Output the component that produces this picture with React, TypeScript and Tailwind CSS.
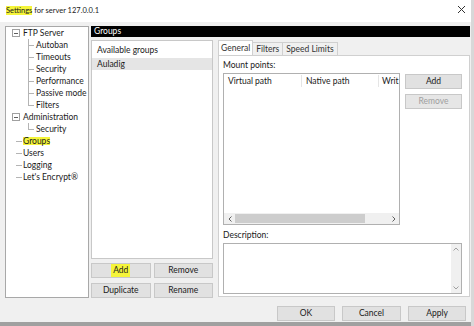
import React from "react";

const FONT = { fontFamily: 'Lato, "Noto Sans", "Liberation Sans", sans-serif' };

function TreeItem({ depth, label, last, expander, highlight }: { depth: number; label: string; last?: boolean; expander?: boolean; highlight?: boolean }) {
  return (
    <div className="relative h-3 flex items-center whitespace-nowrap" style={{ paddingLeft: depth === 0 ? 17 : 30 }}>
      {depth === 0 && (
        <>
          {expander ? (
            <span className="absolute left-[6px] top-[2px] w-[8px] h-[8px] border border-[#a0a0a0] bg-white flex items-center justify-center">
              <span className="w-[4px] h-px bg-[#606060]" />
            </span>
          ) : (
            <span className="absolute left-[10px] top-[6px] w-[6px] border-t border-[#b4b4b4]" />
          )}
        </>
      )}
      {depth === 1 && (
        <>
          <span className={`absolute left-[22px] top-0 border-l border-[#b4b4b4] ${last ? "h-[6px]" : "h-3"}`} />
          <span className="absolute left-[22px] top-[6px] w-[6px] border-t border-[#b4b4b4]" />
        </>
      )}
      <span className={`leading-none ${highlight ? "bg-[#f5f53a]" : ""}`}>{label}</span>
    </div>
  );
}

function Btn({ children, className = "", disabled, hl }: { children: React.ReactNode; className?: string; disabled?: boolean; hl?: boolean }) {
  return (
    <div className={`h-[15px] flex items-center justify-center border border-[#c8c8c8] ${disabled ? "text-[#a0a0a0] bg-[#e6e6e6]" : "bg-[#e1e1e1]"} ${className}`}>
      <span className={hl ? "bg-[#f5f53a] px-[2px]" : ""}>{children}</span>
    </div>
  );
}

export default function App() {
  return (
    <div className="w-[474px] h-[326px] bg-[#f0f0f0] text-[8.5px] text-[#1a1a1a] relative overflow-hidden" style={FONT}>
      {/* title bar */}
      <div className="h-[22px] bg-white flex items-center justify-between pl-[6px] pr-[8px]">
        <div className="text-[7.5px]">
          <span className="bg-[#f5f53a]">Settings</span> for server 127.0.0.1
        </div>
        <svg width="9" height="9" viewBox="0 0 9 9" className="mb-[3px]">
          <path d="M1 1L8 8M8 1L1 8" stroke="#333" strokeWidth="1" />
        </svg>
      </div>

      <div className="flex gap-[2px] pl-[5px] pr-[4px] pt-[4px]">
        {/* tree */}
        <div className="w-[84px] h-[272px] bg-white border border-[#a8a8a8]">
          <TreeItem depth={0} label="FTP Server" expander />
          <TreeItem depth={1} label="Autoban" />
          <TreeItem depth={1} label="Timeouts" />
          <TreeItem depth={1} label="Security" />
          <TreeItem depth={1} label="Performance" />
          <TreeItem depth={1} label="Passive mode" />
          <TreeItem depth={1} label="Filters" last />
          <TreeItem depth={0} label="Administration" expander />
          <TreeItem depth={1} label="Security" last />
          <TreeItem depth={0} label="Groups" highlight />
          <TreeItem depth={0} label="Users" />
          <TreeItem depth={0} label="Logging" />
          <TreeItem depth={0} label="Let's Encrypt®" />
        </div>

        {/* right area */}
        <div className="flex-1 flex flex-col">
          <div className="h-[11px] bg-black text-white flex items-center pl-[3px] leading-none">Groups</div>
          <div className="flex gap-[5px] mt-[3px]">
            {/* group list */}
            <div className="w-[122px] flex flex-col">
              <div className="h-[219px] bg-white border border-[#c8c8c8] pt-[3px]">
                <div className="h-[12px] flex items-center pl-[5px]">Available groups</div>
                <div className="h-[12px] flex items-center pl-[5px] bg-[#e5e5e5] mt-[2px]">Auladig</div>
              </div>
              <div className="grid grid-cols-2 gap-x-[3px] gap-y-[5px] mt-[4px]">
                <Btn hl>Add</Btn>
                <Btn>Remove</Btn>
                <Btn>Duplicate</Btn>
                <Btn>Rename</Btn>
              </div>
            </div>

            {/* tabs */}
            <div className="flex-1 flex flex-col">
              <div className="flex h-[15px] items-end text-[#333]">
                <div className="h-[15px] px-[2px] bg-white border border-b-0 border-[#d0d0d0] flex items-center">General</div>
                <div className="h-[13px] px-[3px] border-t border-r border-[#d0d0d0] flex items-center">Filters</div>
                <div className="h-[13px] px-[3px] border-t border-r border-[#d0d0d0] flex items-center">Speed Limits</div>
              </div>
              <div className="h-[242px] bg-white border border-[#d0d0d0] px-[4px] pt-[3px]">
                <div className="h-[12px] flex items-center">Mount points:</div>
                <div className="flex gap-[5px] mt-[2px]">
                  <div className="w-[177px] h-[152px] border border-[#b0b0b0] flex flex-col">
                    <div className="flex h-[14px] items-center">
                      <div className="w-[78px] pl-[4px] border-r border-[#e5e5e5]">Virtual path</div>
                      <div className="w-[77px] pl-[4px] border-r border-[#e5e5e5]">Native path</div>
                      <div className="flex-1 pl-[3px] overflow-hidden whitespace-nowrap">Writ</div>
                    </div>
                    <div className="flex-1" />
                    <div className="h-[11px] bg-[#f0f0f0] flex items-center">
                      <div className="w-[11px] flex items-center justify-center">
                        <svg width="4" height="6" viewBox="0 0 4 6"><path d="M3.5 0.5L1 3L3.5 5.5" stroke="#606060" fill="none" /></svg>
                      </div>
                      <div className="w-[130px] h-[9px] bg-[#cdcdcd]" />
                      <div className="flex-1" />
                      <div className="w-[11px] flex items-center justify-center">
                        <svg width="4" height="6" viewBox="0 0 4 6"><path d="M0.5 0.5L3 3L0.5 5.5" stroke="#606060" fill="none" /></svg>
                      </div>
                    </div>
                  </div>
                  <div className="w-[57px] flex flex-col gap-[5px] pt-[1px]">
                    <Btn>Add</Btn>
                    <Btn disabled>Remove</Btn>
                  </div>
                </div>
                <div className="h-[12px] flex items-center mt-[4px]">Description:</div>
                <div className="w-[239px] h-[51px] border border-[#b0b0b0] mt-[2px] flex justify-end">
                  <div className="w-[10px] bg-[#f0f0f0] flex flex-col items-center justify-between py-[3px]">
                    <svg width="6" height="4" viewBox="0 0 6 4"><path d="M0.5 3.5L3 1L5.5 3.5" stroke="#a0a0a0" fill="none" /></svg>
                    <svg width="6" height="4" viewBox="0 0 6 4"><path d="M0.5 0.5L3 3L5.5 0.5" stroke="#a0a0a0" fill="none" /></svg>
                  </div>
                </div>
              </div>
            </div>
          </div>
        </div>
      </div>

      {/* dialog buttons */}
      <div className="flex justify-end gap-[7px] pr-[8px] mt-[8px]">
        <Btn className="w-[58px]">OK</Btn>
        <Btn className="w-[59px]">Cancel</Btn>
        <Btn className="w-[58px]">Apply</Btn>
      </div>

      {/* frame edges */}
      <div className="absolute left-0 right-0 bottom-0 h-[4px] bg-[#a0a0a0]" />
      <div className="absolute top-0 bottom-0 right-0 w-[3px] bg-[#d8d8d8]" />
    </div>
  );
}
